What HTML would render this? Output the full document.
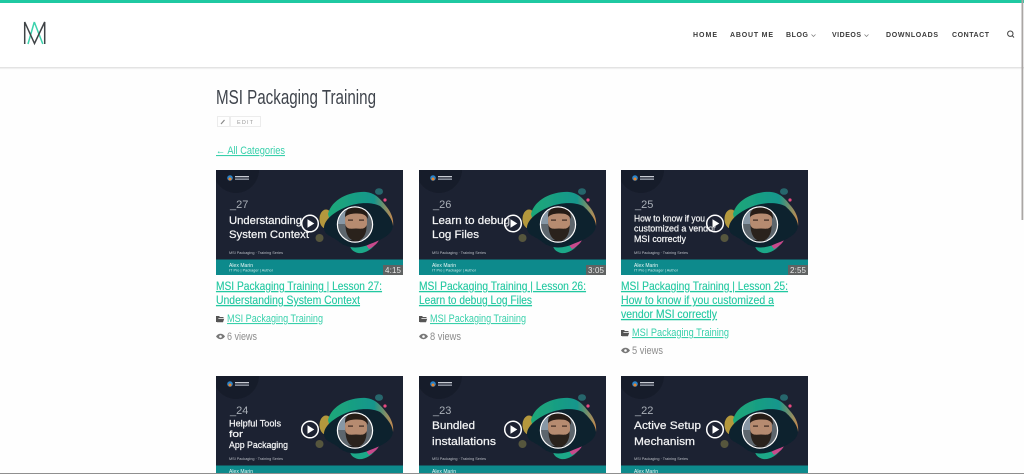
<!DOCTYPE html>
<html lang="en">
<head>
<meta charset="utf-8">
<title>MSI Packaging Training</title>
<style>
html,body{margin:0;padding:0;width:1024px;height:474px;overflow:hidden;background:#fefefe}
svg{display:block;position:absolute;left:0;top:0}
text{font-family:"Liberation Sans",sans-serif}
.nav{font-size:7px;font-weight:700;fill:#3a3a3a}
.lnk{font-size:12px;fill:#22c8a1;text-decoration:underline;stroke:#22c8a1;stroke-width:.12}
.cat{font-size:11px;fill:#38d0ab;text-decoration:underline}
.v{font-size:11px;fill:#8c8c8c}
.tt{fill:#f4f5f6;stroke:#f4f5f6;stroke-width:.22}
.ss{fill:#b9bdc4;font-size:3.8px}
.nm{fill:#e6f5f4;font-size:5px}
.rl{fill:#d5ecec;font-size:3.7px}
.no{fill:#aab0b8;font-size:11px}
.du{fill:#e8e8e8;font-size:8px}
</style>
</head>
<body>
<svg width="1024" height="474" viewBox="0 0 1024 474" xmlns="http://www.w3.org/2000/svg">
<defs>
<filter id="b" x="-5%" y="-5%" width="110%" height="110%"><feGaussianBlur stdDeviation="0.35"/></filter>
<linearGradient id="sh" x1="0" y1="0" x2="0" y2="1"><stop offset="0" stop-color="#dcdcdc"/><stop offset="1" stop-color="#fefefe"/></linearGradient>
<linearGradient id="gr" x1="0" y1="0" x2="1" y2="0"><stop offset="0" stop-color="#1fa878"/><stop offset=".7" stop-color="#13968c"/><stop offset="1" stop-color="#c98a4e"/></linearGradient>
<clipPath id="cl"><rect width="187" height="105"/></clipPath>
<clipPath id="av"><circle cx="139" cy="54.500" r="17"/></clipPath>
<g id="art" filter="url(#b)">
<rect width="187" height="105" fill="#1f2433"/>
<circle cx="20" cy="0" r="23" fill="#171c2b"/>
<circle cx="14" cy="8" r="2.800" fill="#2a83c9"/>
<circle cx="14" cy="9" r="1.500" fill="#e8842c"/>
<rect x="19" y="6" width="14" height="1.300" fill="#c8ccd4"/>
<rect x="19" y="8.500" width="14" height="1.300" fill="#9fa5b0"/>
<ellipse cx="110" cy="49" rx="6.500" ry="9.500" fill="#b4983c"/>
<circle cx="103.500" cy="68" r="4" fill="#57563e"/>
<ellipse cx="163" cy="21.500" rx="4" ry="3.300" fill="#27666c"/>
<circle cx="169" cy="30" r="1.600" fill="#e8487f"/>
<path d="M112 44C116 28 136 21 150 22C160 23 165 30 170 36C175 42 178 49 177 56L150 60L116 60Z" fill="url(#gr)"/>
<path d="M134 75C140 71 156 71 161 72C156 80 148 84 142 83C138 82 135 80 134 76Z" fill="#1aa888"/>
<path d="M150 75L163 70C161 74 157 77 153 79Z" fill="#c84a8c"/>
<path d="M108 58C108 50 118 42 130 37C142 32 156 32 164 36C171 42 177 50 177 56C176 66 164 70 154 74C144 79 130 79 122 71C115 66 108 65 108 58Z" fill="#10202f"/>
<circle cx="139" cy="54.500" r="18.200" fill="#ffffff"/>
<g clip-path="url(#av)">
<rect x="120" y="36" width="38" height="38" fill="#5d666d"/>
<rect x="121" y="42" width="8" height="12" fill="#8797a5"/>
<path d="M129 50C129 43 134 40 141 40C148 40 151 44 151 52C151 62 146 69 140 69C134 69 129 60 129 50Z" fill="#b68b70"/>
<path d="M129 47C129 39 135 36 141 36C148 36 152 40 152 49C150 45 147 43.500 141 43.500C136 43.500 132 44 129 47Z" fill="#251b16"/>
<rect x="132" y="49.500" width="5" height="1.200" fill="#3a2a22"/>
<rect x="143" y="49.500" width="5" height="1.200" fill="#3a2a22"/>
<path d="M129.500 55C131 60 136 58.500 140 58.500C144 58.500 149 60 150.500 55C151 65 146 71 140 71C134 71 129.500 65 129.500 55Z" fill="#2b211c"/>
<path d="M124 74C128 69 132 69 140 71C148 69 152 69 156 74V78H124Z" fill="#191919"/>
</g>
<rect y="89.500" width="187" height="15.500" fill="#0f8a8c"/>
</g>
</defs>

<rect width="1024" height="474" fill="#fefefe"/>

<!-- header -->
<rect width="1024" height="67" fill="#fff"/>
<rect y="67" width="1024" height="2.500" fill="url(#sh)"/>
<rect width="1024" height="3" fill="#1fc9a2"/>

<!-- logo -->
<g fill="none" stroke-width="1.500">
<path d="M34.300 22L28 44M34.300 22L42.800 44" stroke="#3cd3ad"/>
<path d="M24.700 44V22L34.500 43.500L44.700 22V44" stroke="#3f4346"/>
</g>

<!-- nav -->
<text class="nav" x="693" y="37" textLength="24">HOME</text>
<text class="nav" x="730" y="37" textLength="43">ABOUT ME</text>
<text class="nav" x="786" y="37" textLength="22">BLOG</text>
<path d="M811.500 34.500l2 2 2-2" fill="none" stroke="#777" stroke-width=".7"/>
<text class="nav" x="832" y="37" textLength="29">VIDEOS</text>
<path d="M864.500 34.500l2 2 2-2" fill="none" stroke="#777" stroke-width=".7"/>
<text class="nav" x="886" y="37" textLength="52">DOWNLOADS</text>
<text class="nav" x="952" y="37" textLength="37">CONTACT</text>
<circle cx="1010.300" cy="33.700" r="2.700" fill="none" stroke="#444" stroke-width="1"/>
<path d="M1012.300 35.700l1.700 1.800" stroke="#444" stroke-width="1"/>

<!-- page title -->
<text x="216" y="104" font-size="20" fill="#3f444c" textLength="160" lengthAdjust="spacingAndGlyphs">MSI Packaging Training</text>
<rect x="217.500" y="116.500" width="12" height="10" fill="#fefefe" stroke="#ececec"/>
<rect x="230.500" y="116.500" width="30" height="10" fill="#fefefe" stroke="#ececec"/>
<path d="M221 124l3.500-4" stroke="#888" stroke-width="1.200"/>
<text x="237" y="124" font-size="5.500" fill="#999" textLength="16">EDIT</text>
<text x="216" y="154" class="cat" textLength="69" lengthAdjust="spacingAndGlyphs">← All Categories</text>

<!-- row 1 thumbs -->
<g transform="translate(216 170)" clip-path="url(#cl)">
<use href="#art"/>
<text class="no" x="14" y="38">_27</text>
<text class="tt" x="13" y="54" font-size="11" textLength="73" lengthAdjust="spacingAndGlyphs">Understanding</text>
<text class="tt" x="13" y="68" font-size="11" textLength="80" lengthAdjust="spacingAndGlyphs">System Context</text>
<text class="ss" x="13" y="84" textLength="54">MSI Packaging · Training Series</text>
<text class="nm" x="13" y="97" textLength="24">Alex Marin</text>
<text class="rl" x="13" y="101.500" textLength="44">IT Pro | Packager | Author</text>
<circle cx="94" cy="53.500" r="8.300" fill="#1e2334" fill-opacity=".25" stroke="#fff" stroke-width="1.500"/>
<path d="M91.500 49.300v8.400l6.800-4.200z" fill="#fff"/>
<rect x="167" y="95" width="20" height="10" fill="#5f6262"/>
<text class="du" x="169" y="103" textLength="16">4:15</text>
</g>

<g transform="translate(419 170)" clip-path="url(#cl)">
<use href="#art"/>
<text class="no" x="14" y="38">_26</text>
<text class="tt" x="13" y="54" font-size="11" textLength="78" lengthAdjust="spacingAndGlyphs">Learn to debug</text>
<text class="tt" x="13" y="68" font-size="11" textLength="47" lengthAdjust="spacingAndGlyphs">Log Files</text>
<text class="ss" x="13" y="84" textLength="54">MSI Packaging · Training Series</text>
<text class="nm" x="13" y="97" textLength="24">Alex Marin</text>
<text class="rl" x="13" y="101.500" textLength="44">IT Pro | Packager | Author</text>
<circle cx="94" cy="53.500" r="8.300" fill="#1e2334" fill-opacity=".25" stroke="#fff" stroke-width="1.500"/>
<path d="M91.500 49.300v8.400l6.800-4.200z" fill="#fff"/>
<rect x="167" y="95" width="20" height="10" fill="#5f6262"/>
<text class="du" x="169" y="103" textLength="16">3:05</text>
</g>

<g transform="translate(621 170)" clip-path="url(#cl)">
<use href="#art"/>
<text class="no" x="14" y="38">_25</text>
<text class="tt" x="13" y="51.700" font-size="9" textLength="71" lengthAdjust="spacingAndGlyphs">How to know if you</text>
<text class="tt" x="13" y="61.500" font-size="9" textLength="82" lengthAdjust="spacingAndGlyphs">customized a vendor</text>
<text class="tt" x="13" y="72" font-size="9" textLength="52" lengthAdjust="spacingAndGlyphs">MSI correctly</text>
<text class="ss" x="13" y="84" textLength="54">MSI Packaging · Training Series</text>
<text class="nm" x="13" y="97" textLength="24">Alex Marin</text>
<text class="rl" x="13" y="101.500" textLength="44">IT Pro | Packager | Author</text>
<circle cx="94" cy="53.500" r="8.300" fill="#1e2334" fill-opacity=".25" stroke="#fff" stroke-width="1.500"/>
<path d="M91.500 49.300v8.400l6.800-4.200z" fill="#fff"/>
<rect x="167" y="95" width="20" height="10" fill="#5f6262"/>
<text class="du" x="169" y="103" textLength="16">2:55</text>
</g>

<!-- row 1 captions -->
<text class="lnk" x="216" y="290" textLength="166" lengthAdjust="spacingAndGlyphs">MSI Packaging Training | Lesson 27:</text>
<text class="lnk" x="216" y="304" textLength="144" lengthAdjust="spacingAndGlyphs">Understanding System Context</text>
<path d="M216 322v-6h3l1 1h3.500v1h-5l-1 4zM217 322.300l1.200-3.500h6l-1.200 3.500z" fill="#555"/>
<text class="cat" x="227" y="322" textLength="96" lengthAdjust="spacingAndGlyphs">MSI Packaging Training</text>
<path d="M216 336.500c2.500-3.600 6.500-3.600 9 0c-2.500 3.600-6.500 3.600-9 0z" fill="#777"/><circle cx="220.500" cy="336.500" r="1.300" fill="#fff"/>
<text class="v" x="227" y="340" textLength="30" lengthAdjust="spacingAndGlyphs">6 views</text>

<text class="lnk" x="419" y="290" textLength="167" lengthAdjust="spacingAndGlyphs">MSI Packaging Training | Lesson 26:</text>
<text class="lnk" x="419" y="304" textLength="113" lengthAdjust="spacingAndGlyphs">Learn to debug Log Files</text>
<path d="M419 322v-6h3l1 1h3.500v1h-5l-1 4zM420 322.300l1.200-3.500h6l-1.200 3.500z" fill="#555"/>
<text class="cat" x="430" y="322" textLength="96" lengthAdjust="spacingAndGlyphs">MSI Packaging Training</text>
<path d="M419 336.500c2.500-3.600 6.500-3.600 9 0c-2.500 3.600-6.500 3.600-9 0z" fill="#777"/><circle cx="423.500" cy="336.500" r="1.300" fill="#fff"/>
<text class="v" x="430" y="340" textLength="31" lengthAdjust="spacingAndGlyphs">8 views</text>

<text class="lnk" x="621" y="290" textLength="167" lengthAdjust="spacingAndGlyphs">MSI Packaging Training | Lesson 25:</text>
<text class="lnk" x="621" y="304" textLength="153" lengthAdjust="spacingAndGlyphs">How to know if you customized a</text>
<text class="lnk" x="621" y="318" textLength="96" lengthAdjust="spacingAndGlyphs">vendor MSI correctly</text>
<path d="M621 336v-6h3l1 1h3.500v1h-5l-1 4zM622 336.300l1.200-3.500h6l-1.200 3.500z" fill="#555"/>
<text class="cat" x="632" y="336" textLength="97" lengthAdjust="spacingAndGlyphs">MSI Packaging Training</text>
<path d="M621 350.500c2.500-3.600 6.500-3.600 9 0c-2.500 3.600-6.500 3.600-9 0z" fill="#777"/><circle cx="625.500" cy="350.500" r="1.300" fill="#fff"/>
<text class="v" x="632" y="354" textLength="31" lengthAdjust="spacingAndGlyphs">5 views</text>

<!-- row 2 thumbs -->
<g transform="translate(216 376)" clip-path="url(#cl)">
<use href="#art"/>
<text class="no" x="14" y="38">_24</text>
<text class="tt" x="13" y="50.700" font-size="9.500" textLength="52" lengthAdjust="spacingAndGlyphs">Helpful Tools</text>
<text class="tt" x="13" y="61" font-size="9.500" textLength="14" lengthAdjust="spacingAndGlyphs">for</text>
<text class="tt" x="13" y="72" font-size="9.500" textLength="59" lengthAdjust="spacingAndGlyphs">App Packaging</text>
<text class="ss" x="13" y="84" textLength="54">MSI Packaging · Training Series</text>
<text class="nm" x="13" y="97" textLength="24">Alex Marin</text>
<circle cx="94" cy="53.500" r="8.300" fill="#1e2334" fill-opacity=".25" stroke="#fff" stroke-width="1.500"/>
<path d="M91.500 49.300v8.400l6.800-4.200z" fill="#fff"/>
</g>

<g transform="translate(419 376)" clip-path="url(#cl)">
<use href="#art"/>
<text class="no" x="14" y="38">_23</text>
<text class="tt" x="13" y="53" font-size="11" textLength="43" lengthAdjust="spacingAndGlyphs">Bundled</text>
<text class="tt" x="13" y="69" font-size="11" textLength="64" lengthAdjust="spacingAndGlyphs">installations</text>
<text class="ss" x="13" y="84" textLength="54">MSI Packaging · Training Series</text>
<text class="nm" x="13" y="97" textLength="24">Alex Marin</text>
<circle cx="94" cy="53.500" r="8.300" fill="#1e2334" fill-opacity=".25" stroke="#fff" stroke-width="1.500"/>
<path d="M91.500 49.300v8.400l6.800-4.200z" fill="#fff"/>
</g>

<g transform="translate(621 376)" clip-path="url(#cl)">
<use href="#art"/>
<text class="no" x="14" y="38">_22</text>
<text class="tt" x="13" y="53" font-size="11" textLength="67" lengthAdjust="spacingAndGlyphs">Active Setup</text>
<text class="tt" x="13" y="69" font-size="11" textLength="61" lengthAdjust="spacingAndGlyphs">Mechanism</text>
<text class="ss" x="13" y="84" textLength="54">MSI Packaging · Training Series</text>
<text class="nm" x="13" y="97" textLength="24">Alex Marin</text>
<circle cx="94" cy="53.500" r="8.300" fill="#1e2334" fill-opacity=".25" stroke="#fff" stroke-width="1.500"/>
<path d="M91.500 49.300v8.400l6.800-4.200z" fill="#fff"/>
</g>

<!-- window chrome -->
<rect x="1021.500" y="0" width="1.800" height="220" fill="#aaa6a4"/>
<rect y="473" width="1024" height="1" fill="#8f8f8f"/>
</svg>
</body>
</html>
